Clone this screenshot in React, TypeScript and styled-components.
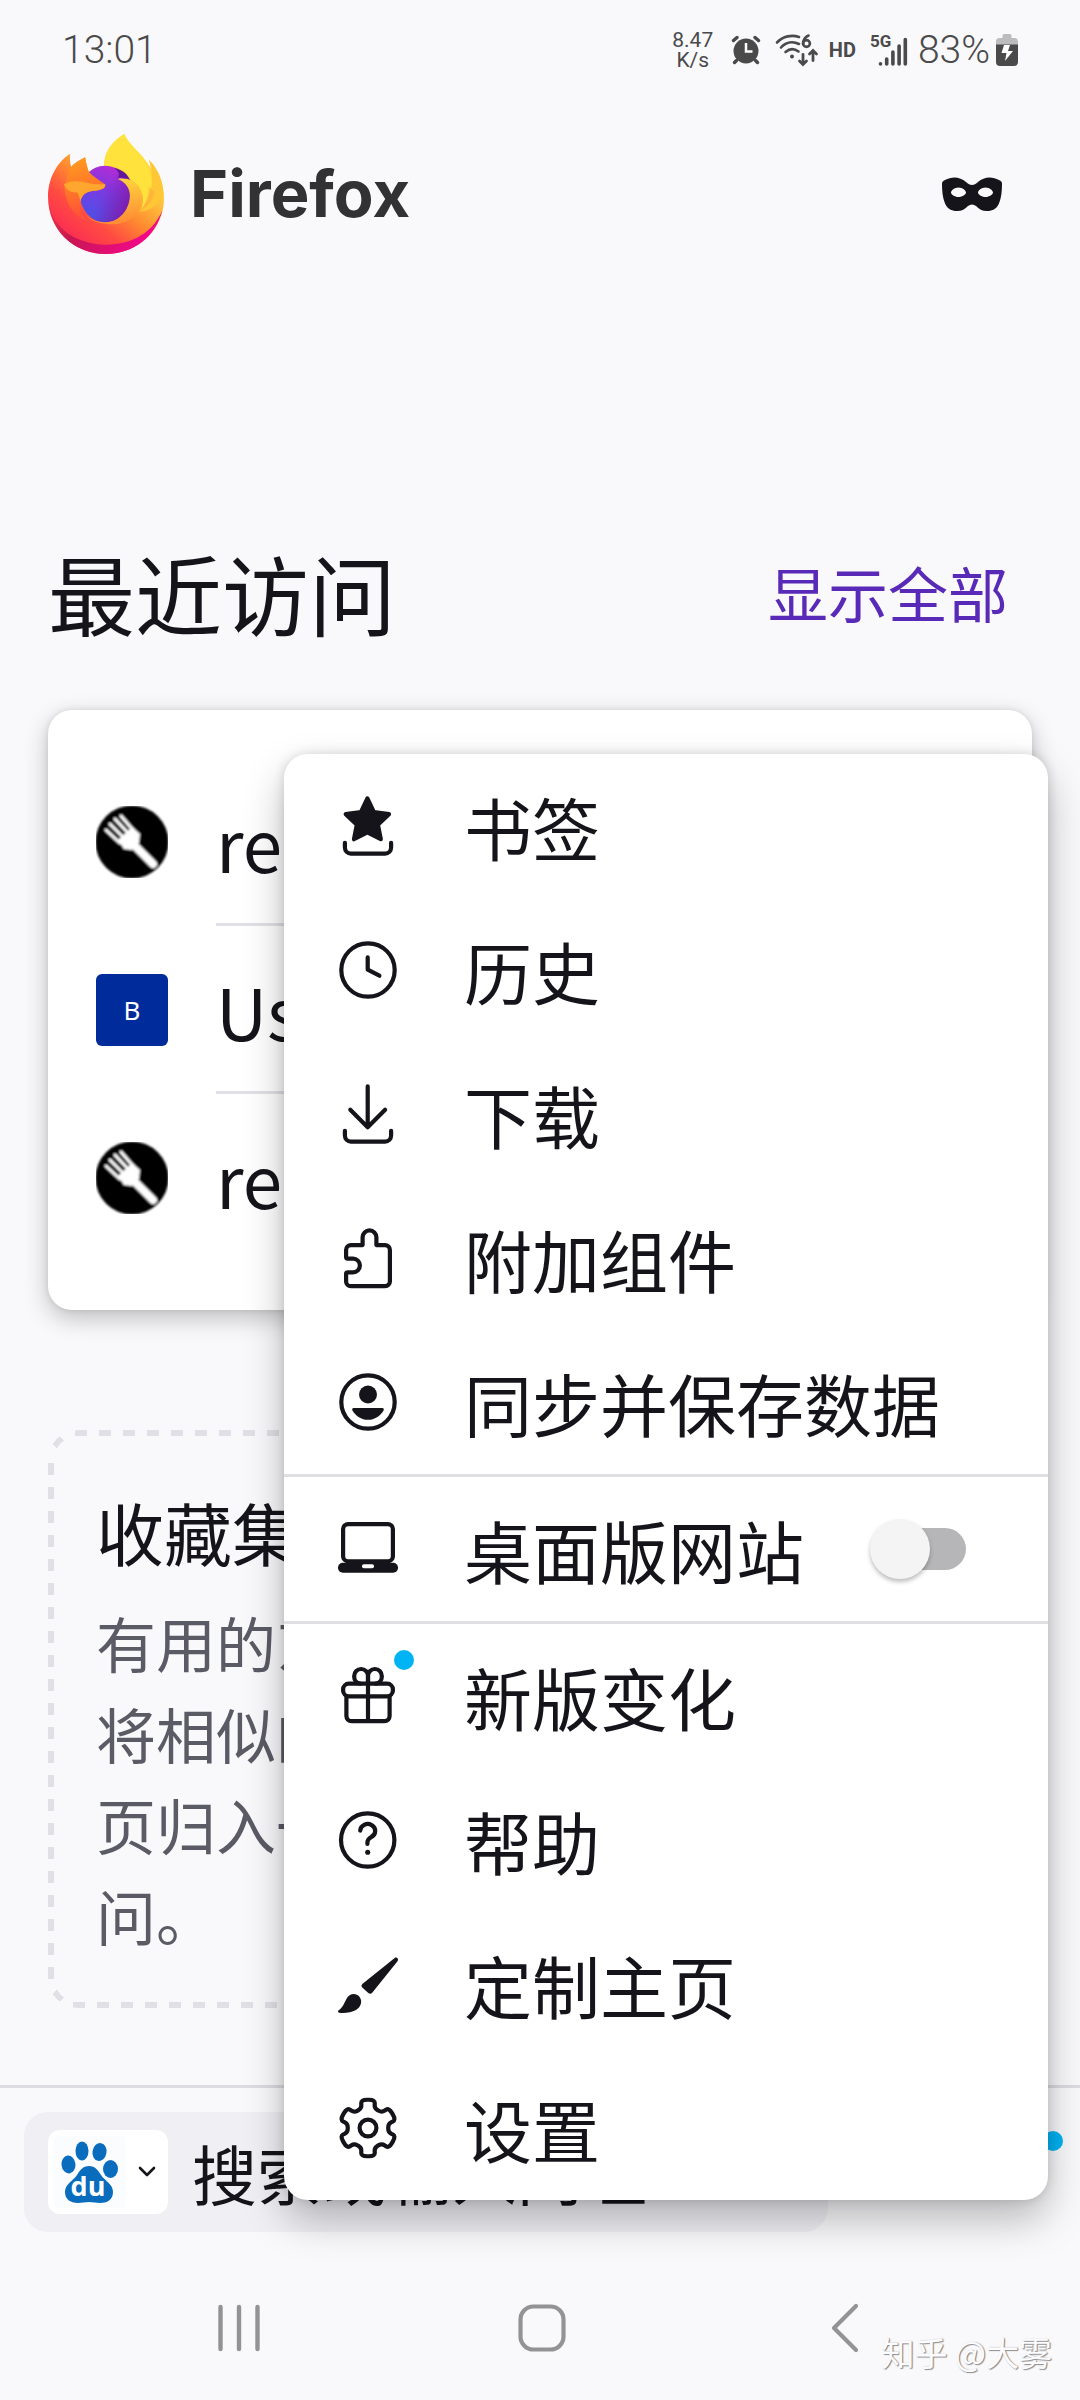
import React, { useState } from 'react';
import styled, { createGlobalStyle } from 'styled-components';

const ink = '#15141a';
const surface = '#f9f9fb';
const statusInk = '#4a4a4b';
const cjk = `'Noto Sans CJK SC', 'Noto Sans', sans-serif`;
const latin = `Roboto, 'Noto Sans CJK SC', sans-serif`;

const GlobalStyle = createGlobalStyle`
  *, *::before, *::after { box-sizing: border-box; }
  body { margin: 0; background: ${surface}; color: ${ink}; font-family: ${cjk}; }
  button { border: 0; padding: 0; background: none; color: inherit; font: inherit; cursor: pointer; }
  h1, h2, p, ul { margin: 0; padding: 0; font-weight: 400; }
  ul { list-style: none; }
  svg { display: block; flex: none; }
`;

const Page = styled.div`
  position: relative;
  display: flex;
  flex-direction: column;
  min-height: 100vh;
  overflow: hidden;
`;

/* ---------- status bar ---------- */

const StatusBar = styled.div`
  display: flex;
  align-items: center;
  justify-content: space-between;
  height: 100px;
  padding: 0 62px;
  color: ${statusInk};
  font-family: ${latin};
`;

const StatusText = styled.span`
  font-size: 39px;
  font-weight: 300;
  line-height: 48px;
`;

const StatusIcons = styled.div`
  display: flex;
  align-items: center;
`;

const Speed = styled.span`
  width: 44px;
  margin-right: 16px;
  font-size: 21px;
  line-height: 20px;
  text-align: center;
`;

const StatusTag = styled.span`
  margin: 0 14px 0 10px;
  font-size: 20px;
  font-weight: 700;
  line-height: 24px;
`;

const WifiSlot = styled.span`
  margin-left: 14px;
`;

const Signal = styled.span`
  display: flex;
  align-items: flex-start;
  margin-right: 10px;
`;

const SignalTag = styled.span`
  width: 8px;
  font-size: 17px;
  font-weight: 700;
  line-height: 14px;
`;

const BatterySlot = styled.span`
  margin-left: 6px;
`;

/* ---------- header ---------- */

const Header = styled.header`
  display: flex;
  align-items: center;
  justify-content: space-between;
  padding: 34px 60px 0 48px;
`;

const Brand = styled.div`
  display: flex;
  align-items: center;
  gap: 26px;
`;

const Wordmark = styled.span`
  color: #323234;
  font-family: Inter, Roboto, sans-serif;
  font-size: 65px;
  font-weight: 700;
  line-height: 80px;
`;

const IconButton = styled.button`
  display: grid;
  place-items: center;
  width: 96px;
  height: 96px;
`;

/* ---------- home content ---------- */

const Content = styled.main`
  flex: 1;
  padding: 278px 48px 72px;
`;

const SectionHead = styled.div`
  display: flex;
  align-items: center;
  justify-content: space-between;
  height: 120px;
  margin-bottom: 58px;
  padding-right: 24px;
`;

const SectionTitle = styled.h1`
  font-size: 87px;
  line-height: 120px;
`;

const ShowAll = styled.a`
  color: #592ab8;
  font-size: 60px;
  line-height: 90px;
  text-decoration: none;
`;

const Card = styled.ul`
  padding: 48px;
  border-radius: 24px;
  background: #fff;
  box-shadow: 0 8px 24px rgba(0, 0, 0, 0.24), 0 0 6px rgba(0, 0, 0, 0.1);
`;

const Visit = styled.li`
  display: flex;
  align-items: center;
  gap: 48px;
  height: 168px;
`;

const VisitTitle = styled.span<{ $divided: boolean }>`
  flex: 1;
  align-self: stretch;
  border-bottom: 3px solid ${(p) => (p.$divided ? '#e0e0e6' : 'transparent')};
  font-family: ${cjk};
  font-size: 71px;
  line-height: 168px;
  white-space: nowrap;
`;

const LetterTile = styled.span`
  display: grid;
  place-items: center;
  width: 72px;
  height: 72px;
  border-radius: 6px;
  background: #002b9a;
  color: #fff;
  font-family: 'Noto Sans', sans-serif;
  font-size: 26px;
  line-height: 32px;
`;

const dash = '#000 0 12px, transparent 12px 24px';

const Collections = styled.section`
  position: relative;
  margin-top: 120px;
  padding: 48px;

  &::before {
    content: '';
    position: absolute;
    inset: 0;
    border: 6px solid #e0e0e6;
    border-radius: 30px;
    mask:
      repeating-linear-gradient(90deg, ${dash}) 27px 0 / calc(100% - 54px) 6px no-repeat,
      repeating-linear-gradient(90deg, ${dash}) 25px 100% / calc(100% - 50px) 6px no-repeat,
      repeating-linear-gradient(180deg, ${dash}) 0 33px / 6px calc(100% - 60px) no-repeat,
      repeating-linear-gradient(180deg, ${dash}) 100% 33px / 6px calc(100% - 60px) no-repeat,
      linear-gradient(45deg, transparent 32%, #000 32% 68%, transparent 68%) 0 2px / 22px 22px no-repeat,
      linear-gradient(-45deg, transparent 32%, #000 32% 68%, transparent 68%) 0 calc(100% - 2px) / 22px 22px no-repeat,
      linear-gradient(-45deg, transparent 32%, #000 32% 68%, transparent 68%) 100% 2px / 22px 22px no-repeat,
      linear-gradient(45deg, transparent 32%, #000 32% 68%, transparent 68%) 100% calc(100% - 2px) / 22px 22px no-repeat;
  }
`;

const CollectionsTitle = styled.h2`
  margin-bottom: 10px;
  font-size: 68px;
  line-height: 108px;
`;

const CollectionsText = styled.p`
  color: #5b5b66;
  font-size: 60px;
  line-height: 91px;
  white-space: pre-line;
`;

/* ---------- toolbar ---------- */

const Toolbar = styled.div`
  display: flex;
  align-items: center;
  justify-content: space-between;
  padding: 24px;
  border-top: 3px solid #dcdce1;
`;

const SearchBox = styled.div`
  display: flex;
  align-items: center;
  flex: 0 1 804px;
  gap: 24px;
  min-width: 0;
  height: 120px;
  padding: 0 24px;
  border-radius: 24px;
  background: #efeff4;
`;

const EngineButton = styled.button`
  display: flex;
  flex: none;
  align-items: center;
  gap: 12px;
  width: 120px;
  height: 84px;
  padding: 0 6px;
  border-radius: 12px;
  background: #fff;
`;

const SearchInput = styled.input`
  flex: 1;
  width: 0;
  min-width: 0;
  height: 108px;
  padding: 0;
  border: 0;
  outline: 0;
  background: none;
  color: ${ink};
  font-family: ${cjk};
  font-size: 65px;
  line-height: 96px;
  &::placeholder { color: ${ink}; opacity: 1; }
`;

const MenuButton = styled(IconButton)`
  position: relative;
`;

const Badge = styled.span<{ $top: number; $right: number }>`
  position: absolute;
  top: ${(p) => p.$top}px;
  right: ${(p) => p.$right}px;
  width: 20px;
  height: 20px;
  border-radius: 50%;
  background: #00b3f4;
`;

/* ---------- system navigation ---------- */

const NavBar = styled.nav`
  position: relative;
  display: flex;
  justify-content: space-around;
  align-items: center;
  height: 144px;
  padding: 0 84px 0 88px;
  color: #939395;
`;

const NavButton = styled.button`
  display: grid;
  place-items: center;
  width: 96px;
  height: 96px;
`;

const Watermark = styled.span`
  position: absolute;
  right: 28px;
  bottom: 24px;
  color: #fcfcfe;
  font-size: 33px;
  line-height: 48px;
  text-shadow: 1px 1px 1px #8d8d90, 1px 0 1px #a5a5a8;
`;

/* ---------- popup menu ---------- */

const Menu = styled.div`
  position: absolute;
  right: 32px;
  bottom: 200px;
  width: 764px;
  border-radius: 24px;
  background: #fff;
  box-shadow: 0 20px 40px rgba(0, 0, 0, 0.26), 0 0 12px rgba(0, 0, 0, 0.14);
`;

const MenuGroup = styled.ul`
  & + & { border-top: 3px solid #e0e0e2; }
`;

const menuRow = `
  display: flex;
  align-items: center;
  gap: 60px;
  width: 100%;
  height: 144px;
  padding: 0 82px 0 48px;
  text-align: left;
  cursor: pointer;
`;

const MenuItem = styled.button`${menuRow}`;
const MenuToggle = styled.label`${menuRow}`;

const MenuIcon = styled.span`
  position: relative;
  width: 72px;
  height: 72px;
`;

const MenuLabel = styled.span`
  flex: 1;
  padding-top: 2px;
  font-size: 68px;
  line-height: 100px;
  white-space: nowrap;
`;

const Switch = styled.input`
  appearance: none;
  position: relative;
  width: 94px;
  height: 42px;
  margin: 0;
  border-radius: 21px;
  background: #b6b6b9;
  cursor: pointer;

  &::before {
    content: '';
    position: absolute;
    top: -9px;
    left: -2px;
    width: 60px;
    height: 60px;
    border-radius: 50%;
    background: #f4f4f5;
    box-shadow: 0 3px 4px rgba(0, 0, 0, 0.25);
  }
  &:checked { background: #ab71ff; }
  &:checked::before { left: 36px; }
`;

/* ---------- drawings ---------- */

const Line = ({ children }: { children: React.ReactNode }) => (
  <svg width="72" height="72" viewBox="0 0 24 24" fill="none" stroke={ink} strokeWidth="1.4"
    strokeLinecap="round" strokeLinejoin="round" aria-hidden="true">
    {children}
  </svg>
);

const tray = 'M4.3 17.6v1.6a2 2 0 0 0 2 2h11.4a2 2 0 0 0 2-2v-1.6';

const gearOutline = (() => {
  const pts: [number, number][] = [];
  for (let k = 0; k < 6; k++) {
    [[-14, 9.7], [14, 9.7], [18, 6.9], [42, 6.9]].forEach(([a, r]) => {
      const t = ((k * 60 + a - 90) * Math.PI) / 180;
      pts.push([12 + r * Math.cos(t), 12 + r * Math.sin(t)]);
    });
  }
  const mix = (a: [number, number], b: [number, number], t: number) =>
    `${(a[0] + (b[0] - a[0]) * t).toFixed(2)} ${(a[1] + (b[1] - a[1]) * t).toFixed(2)}`;
  return pts
    .map((p, i) => {
      const prev = pts[(i + pts.length - 1) % pts.length];
      const next = pts[(i + 1) % pts.length];
      return `${i ? 'L' : 'M'}${mix(p, prev, 0.42)}Q${p[0].toFixed(2)} ${p[1].toFixed(2)} ${mix(p, next, 0.42)}`;
    })
    .join('') + 'Z';
})();

const icons = {
  bookmarks: (
    <Line>
      <path fill={ink} d="M11.8 2.8 13.97 7.4 19 8.05 15.3 11.54 16.27 16.4 11.8 14.1 7.33 16.4 8.28 11.54 4.57 8.05 9.63 7.4Z" />
      <path d={tray} />
    </Line>
  ),
  history: (
    <Line>
      <circle cx="12" cy="12" r="8.9" />
      <path d="M11.9 7.8v4.1l3.9 2" />
    </Line>
  ),
  downloads: (
    <Line>
      <path d="M11.9 2.8v13.6M6.1 10.6l5.8 5.8 5.8-5.8" />
      <path d={tray} />
    </Line>
  ),
  addons: (
    <Line>
      <path d="M10.2 7.7V5.1a2.3 2.3 0 0 1 4.6 0V7.7h2.9a1.6 1.6 0 0 1 1.6 1.6v10.5a1.6 1.6 0 0 1-1.6 1.6H6.3a1.6 1.6 0 0 1-1.6-1.6v-2.5a.5.5 0 0 1 .5-.5H7a2.3 2.3 0 0 0 0-4.6H5.2a.5.5 0 0 1-.5-.5V9.3a1.6 1.6 0 0 1 1.6-1.6z" />
    </Line>
  ),
  account: (
    <Line>
      <circle cx="12" cy="12" r="8.9" />
      <circle cx="12" cy="9.5" r="3" fill={ink} stroke="none" />
      <path fill={ink} stroke="none" d="M7.2 14h9.6c.4 0 .6.4.4.8-1.1 1.9-3 3.1-5.2 3.1s-4.1-1.2-5.2-3.1c-.2-.4 0-.8.4-.8z" />
    </Line>
  ),
  desktop: (
    <Line>
      <rect x="3.7" y="3.7" width="16.6" height="12.4" rx="1.7" />
      <rect x="2" y="16.6" width="20" height="3.3" rx="1.6" fill={ink} stroke="none" />
      <rect x="10" y="17.1" width="4" height="1.3" rx=".6" fill="#fff" stroke="none" />
    </Line>
  ),
  whatsNew: (
    <Line>
      <rect x="3.7" y="7.9" width="16.6" height="4.2" rx="1.9" />
      <path d="M4.8 12.1v6.6a1.7 1.7 0 0 0 1.7 1.7h11a1.7 1.7 0 0 0 1.7-1.7v-6.6M12 5.4v15" />
      <path d="M12 7.9V5.3a2.3 2.3 0 0 0-4.6 0v.3a2.3 2.3 0 0 0 2 2.3M12 7.9V5.3a2.3 2.3 0 0 1 4.6 0v.3a2.3 2.3 0 0 1-2 2.3" />
    </Line>
  ),
  help: (
    <Line>
      <circle cx="11.9" cy="12" r="8.9" />
      <path d="M9.4 8.9a2.5 2.3 0 1 1 3.7 2.1c-.8.5-1.3.9-1.3 1.8v.5" />
      <circle cx="11.9" cy="16.1" r=".85" fill={ink} stroke="none" />
    </Line>
  ),
  customize: (
    <Line>
      <g fill={ink} stroke="none">
        <path d="M20.9 3.3c.7-.4 1.4.3 1 1L13.4 14.9q-.6.6-1.3.1l-2-1.8q-.6-.6 0-1.2z" />
        <path d="M2.3 20.7c1.2-.7 1.7-2.2 2.5-3.7 1-2 3.2-2.1 4.4-.7 1.1 1.5.4 3.3-1.2 4.4-1.5.9-4 1.1-5.6.9-.5-.1-.5-.6-.1-.9z" />
      </g>
    </Line>
  ),
  settings: (
    <Line>
      <path d={gearOutline} />
      <circle cx="12" cy="12" r="2.8" />
    </Line>
  ),
};

const FirefoxLogo = () => (
  <svg width="116" height="120" viewBox="139 402 337 360" preserveAspectRatio="none" aria-hidden="true">
    <defs>
      <linearGradient id="fxBody" x1="420" y1="450" x2="200" y2="720" gradientUnits="userSpaceOnUse">
        <stop offset="0" stopColor="#ffe83d" />
        <stop offset=".3" stopColor="#ffbd3a" />
        <stop offset=".52" stopColor="#ff8a30" />
        <stop offset=".75" stopColor="#ff4a42" />
        <stop offset="1" stopColor="#fb2c54" />
      </linearGradient>
      <linearGradient id="fxBase" x1="150" y1="600" x2="400" y2="760" gradientUnits="userSpaceOnUse">
        <stop offset="0" stopColor="#ef3a3f" />
        <stop offset=".35" stopColor="#c61752" />
        <stop offset="1" stopColor="#f3088a" />
      </linearGradient>
      <linearGradient id="fxGlobe" x1="330" y1="500" x2="265" y2="660" gradientUnits="userSpaceOnUse">
        <stop offset="0" stopColor="#b52bd6" />
        <stop offset=".45" stopColor="#7a3ae0" />
        <stop offset="1" stopColor="#4a52e8" />
      </linearGradient>
      <linearGradient id="fxShade" x1="300" y1="580" x2="380" y2="620" gradientUnits="userSpaceOnUse">
        <stop offset="0" stopColor="#7d1fb0" stopOpacity="0" />
        <stop offset="1" stopColor="#7d1aa8" />
      </linearGradient>
      <linearGradient id="fxHead" x1="200" y1="480" x2="240" y2="640" gradientUnits="userSpaceOnUse">
        <stop offset="0" stopColor="#ff9a1f" />
        <stop offset=".5" stopColor="#ff7a28" />
        <stop offset="1" stopColor="#ff5436" />
      </linearGradient>
      <linearGradient id="fxTail" x1="360" y1="530" x2="380" y2="680" gradientUnits="userSpaceOnUse">
        <stop offset="0" stopColor="#ffd83a" />
        <stop offset="1" stopColor="#ff8436" />
      </linearGradient>
    </defs>
    <path fill="url(#fxBody)" d="M203 461C165 487 139 535 139 590c0 100 76 172 168 172s169-72 169-167c0-45-16-88-44-115 8 17 12 32 14 48C430 470 385 450 360 402c-35 23-58 53-58 96-17 2-32 9-45 17-5-15-8-30-10-43-17 8-29 18-40 31-4-13-5-28-4-42Z" />
    <path fill="#ffe23c" d="M360 402c-35 23-58 53-58 96 40-3 70 20 78 42 35 20 45 60 25 95 40-30 55-100 5-160-20-24-40-50-50-73Z" />
    <path fill="#ffc735" d="M432 480c12 45 20 100-28 155 25 0 50-15 70-50 0-40-15-80-42-105Z" />
    <path fill="url(#fxBase)" d="M141 610c15 80 85 124 166 124 80 0 140-40 164-104-18 80-84 132-164 132-85 0-157-60-166-152Z" />
    <ellipse cx="304.500" cy="582" rx="73" ry="85" fill="url(#fxGlobe)" />
    <ellipse cx="304.500" cy="582" rx="73" ry="85" fill="url(#fxShade)" />
    <path fill="#611799" d="M330 503c25 6 42 20 47 38-12-8-24-10-37-8 12-10 2-22-10-30Z" />
    <path fill="url(#fxHead)" d="M257 515c14 16 30 24 48 38 4 14-20 20-38 20-20 3-34 16-35 42 0 20 6 35 20 48-40-16-68-60-64-108l15-52c11-13 27-23 44-31 2 13 5 28 10 43Z" />
    <path fill="#ffa62e" d="M185 553c22-14 50-10 72-4 18 5 35 4 48 4 4 14-20 20-38 20-18 2-30 12-34 32-2-14-6-24-10-28-16 4-32-8-38-24Z" />
    <path fill="url(#fxTail)" d="M342 537c36-8 66 18 66 62 0 50-40 76-90 74-34-2-58-12-72-30 14 14 34 24 58 24 44 0 73-36 73-80 0-22-14-42-35-50Z" />
    <path fill="#ff9b3c" d="M432 560c0 28-8 52-28 75 22-12 38-32 44-60Z" opacity=".45" />
  </svg>
);

const Mask = () => (
  <svg width="60" height="34" viewBox="0 0 60 34" aria-hidden="true">
    <path fill={ink} fillRule="evenodd" d="M0 6.500C0 5 1 4 3 3 10-1 18-.5 24 5c2 2 4 3 6 3s4-1 6-3c6-5.500 14-6 21-2 2 1 3 2 3 3.500 0 7-.5 14-3 20C54 33 49 34 45 34c-5 0-8-2-11-5-2.500-2-5.500-2-8 0-3 3-6 5-11 5-4 0-9-1-12-7.500C.5 20.500 0 13.500 0 6.500ZM16.500 10.500c-4 0-7.500 3-7.500 5s3.500 4.500 7.500 4.500 7.500-2.500 7.500-4.500-3.500-5-7.500-5Zm27 0c-4 0-7.500 3-7.500 5s3.500 4.500 7.500 4.500 7.500-2.500 7.500-4.500-3.500-5-7.500-5Z" />
  </svg>
);

const AlarmIcon = () => (
  <svg width="30" height="30" viewBox="0 0 30 30" fill="none" stroke={statusInk} strokeLinecap="round" aria-hidden="true">
    <circle cx="15" cy="16" r="12.500" fill={statusInk} stroke="none" />
    <path strokeWidth="3.500" d="M2.500 5.500 6 2.500M27.500 5.500 24 2.500M5.500 25.500 3.500 27.500M24.500 25.500 26.500 27.500" />
    <path stroke="#fff" strokeWidth="2.500" strokeLinecap="butt" d="M15 8v8.500h6.500" />
  </svg>
);

const WifiIcon = () => (
  <svg width="44" height="34" viewBox="0 0 44 34" fill="none" stroke={statusInk} strokeWidth="2.600" strokeLinecap="round" aria-hidden="true">
    <path d="M2 9.500C8 3 17 1.500 24 4M6 14.500C11 9 18 8 24 11M10.500 19c4-3.500 9-3.500 13-.5" />
    <circle cx="17" cy="23.500" r="2" fill={statusInk} stroke="none" />
    <path d="M33.500 2.500c-3 1.500-5.500 5-5.500 8.500" />
    <circle cx="31.500" cy="10.500" r="3.400" />
    <path d="M28 21.500v9.500M24.500 28l3.500 3.500 3.500-3.500M38 27.500V18M34.500 21l3.500-3.500 3.500 3.500" strokeWidth="2.800" />
  </svg>
);

const SignalIcon = () => (
  <svg width="30" height="32" viewBox="0 0 30 32" stroke={statusInk} strokeWidth="3.600" strokeLinecap="round" aria-hidden="true">
    <path d="M2.500 29.800v.1M8.700 25v5M14.900 18v12M21.100 12v18M27.300 5.500V30" />
  </svg>
);

const BatteryIcon = () => (
  <svg width="22" height="32" viewBox="0 0 22 32" aria-hidden="true">
    <path fill="#bcbcbe" d="M6.500 1.500q0-1.500 1.500-1.500h6q1.500 0 1.500 1.500V4h3Q22 4 22 7.500V12H0V7.500Q0 4 3.500 4h3Z" />
    <path fill={statusInk} d="M0 10.500h22V28q0 4-4 4H4q-4 0-4-4Z" />
    <path fill="#fff" d="M8 11h6l-2 6h5L9 27l1.500-8H5.500Z" />
  </svg>
);

const ForkFavicon = () => (
  <svg width="72" height="72" viewBox="0 0 72 72" aria-hidden="true">
    <defs>
      <filter id="soft"><feGaussianBlur stdDeviation="1" /></filter>
    </defs>
    <g filter="url(#soft)">
      <circle cx="36" cy="36" r="36.500" fill="#000" />
      <g stroke="#fff" strokeLinecap="round" fill="none">
        <path strokeWidth="3" d="M10 24 24 37M14 18 28 32M19 13 33 28M25 10 37 24" />
        <path strokeWidth="9" d="M30 37 38 30" />
        <path strokeWidth="8" d="M36 37 57 58" />
      </g>
      <path fill="#fff" d="M22 34 36 21 44 28 43 37 36 44 28 43Z" />
    </g>
  </svg>
);

const BaiduLogo = () => (
  <svg width="72" height="72" viewBox="0 0 72 72" aria-hidden="true">
    <rect width="72" height="72" rx="4" fill="#fbfcfe" />
    <g fill="#0a6cbd">
      <ellipse cx="14.500" cy="28.500" rx="7" ry="9" transform="rotate(-6 14.500 28.500)" />
      <ellipse cx="28" cy="15" rx="6.500" ry="9.500" />
      <ellipse cx="45.500" cy="16" rx="7" ry="9" transform="rotate(10 45.500 16)" />
      <ellipse cx="56.500" cy="33" rx="7.500" ry="9" />
      <path d="M35 30c6 0 9 4 12 9 4 6 12 9 12 17 0 8-6 11-13 11-4 0-7-1-11-1s-7 1-11 1c-8 0-13-4-13-11 0-8 8-11 12-17 3-5 6-9 12-9Z" />
    </g>
    <text x="34" y="60" textAnchor="middle" fill="#fff" fontFamily="'Open Sans', 'Noto Sans', sans-serif" fontWeight="700" fontSize="27">du</text>
  </svg>
);

const visits = [
  { title: 're', icon: <ForkFavicon /> },
  { title: 'Us', icon: <LetterTile aria-hidden="true">B</LetterTile> },
  { title: 're', icon: <ForkFavicon /> },
];

const primary = [
  { label: '书签', icon: icons.bookmarks },
  { label: '历史', icon: icons.history },
  { label: '下载', icon: icons.downloads },
  { label: '附加组件', icon: icons.addons },
  { label: '同步并保存数据', icon: icons.account },
];

const secondary = [
  { label: '新版变化', icon: icons.whatsNew, badge: true },
  { label: '帮助', icon: icons.help },
  { label: '定制主页', icon: icons.customize },
  { label: '设置', icon: icons.settings },
];

type Entry = { label: string; icon: React.ReactNode; badge?: boolean };

const MenuEntry = ({ label, icon, badge }: Entry) => (
  <li>
    <MenuItem type="button">
      <MenuIcon>
        {icon}
        {badge && <Badge $top={-10} $right={-10} />}
      </MenuIcon>
      <MenuLabel>{label}</MenuLabel>
    </MenuItem>
  </li>
);

export default function App() {
  const [desktop, setDesktop] = useState(false);
  const [query, setQuery] = useState('');

  return (
    <Page>
      <GlobalStyle />
      <StatusBar>
        <StatusText>13:01</StatusText>
        <StatusIcons>
          <Speed>8.47 K/s</Speed>
          <AlarmIcon />
          <WifiSlot><WifiIcon /></WifiSlot>
          <StatusTag>HD</StatusTag>
          <Signal>
            <SignalTag>5G</SignalTag>
            <SignalIcon />
          </Signal>
          <StatusText>83%</StatusText>
          <BatterySlot><BatteryIcon /></BatterySlot>
        </StatusIcons>
      </StatusBar>

      <Header>
        <Brand>
          <FirefoxLogo />
          <Wordmark>Firefox</Wordmark>
        </Brand>
        <IconButton type="button" aria-label="隐私浏览">
          <Mask />
        </IconButton>
      </Header>

      <Content>
        <SectionHead>
          <SectionTitle>最近访问</SectionTitle>
          <ShowAll href="#history">显示全部</ShowAll>
        </SectionHead>
        <Card>
          {visits.map((v, i) => (
            <Visit key={i}>
              {v.icon}
              <VisitTitle $divided={i < visits.length - 1}>{v.title}</VisitTitle>
            </Visit>
          ))}
        </Card>
        <Collections>
          <CollectionsTitle>收藏集</CollectionsTitle>
          <CollectionsText>{'有用的东西\n将相似的\n页归入一\n问。'}</CollectionsText>
        </Collections>
      </Content>

      <Toolbar>
        <SearchBox>
          <EngineButton type="button" aria-label="百度">
            <BaiduLogo />
            <svg width="18" height="12" viewBox="0 0 18 12" fill="none" stroke={ink} strokeWidth="2.600" strokeLinecap="round" strokeLinejoin="round" aria-hidden="true">
              <path d="M2 2l7 7 7-7" />
            </svg>
          </EngineButton>
          <SearchInput
            aria-label="搜索或输入网址"
            placeholder="搜索或输入网址"
            value={query}
            onChange={(e) => setQuery(e.target.value)}
          />
        </SearchBox>
        <MenuButton type="button" aria-label="菜单">
          <Badge $top={7} $right={-7} />
        </MenuButton>
      </Toolbar>

      <NavBar>
        <NavButton type="button" aria-label="最近任务">
          <svg width="42" height="48" viewBox="0 0 42 48" stroke="currentColor" strokeWidth="4.400" strokeLinecap="round">
            <path d="M2.500 3v42M21 3v42M39.500 3v42" />
          </svg>
        </NavButton>
        <NavButton type="button" aria-label="主屏幕">
          <svg width="48" height="48" viewBox="0 0 48 48" fill="none" stroke="currentColor" strokeWidth="4.200">
            <rect x="2.500" y="2.500" width="43" height="43" rx="13" />
          </svg>
        </NavButton>
        <NavButton type="button" aria-label="返回">
          <svg width="28" height="50" viewBox="0 0 28 50" fill="none" stroke="currentColor" strokeWidth="4.200" strokeLinecap="round" strokeLinejoin="round">
            <path d="M25 3 3 25l22 22" />
          </svg>
        </NavButton>
        <Watermark>知乎 @大雾</Watermark>
      </NavBar>

      <Menu>
        <MenuGroup>
          {primary.map((m) => <MenuEntry key={m.label} {...m} />)}
        </MenuGroup>
        <MenuGroup>
          <li>
            <MenuToggle htmlFor="desktop-site">
              <MenuIcon>{icons.desktop}</MenuIcon>
              <MenuLabel>桌面版网站</MenuLabel>
              <Switch
                id="desktop-site"
                type="checkbox"
                role="switch"
                checked={desktop}
                onChange={(e) => setDesktop(e.target.checked)}
              />
            </MenuToggle>
          </li>
        </MenuGroup>
        <MenuGroup>
          {secondary.map((m) => <MenuEntry key={m.label} {...m} />)}
        </MenuGroup>
      </Menu>
    </Page>
  );
}
